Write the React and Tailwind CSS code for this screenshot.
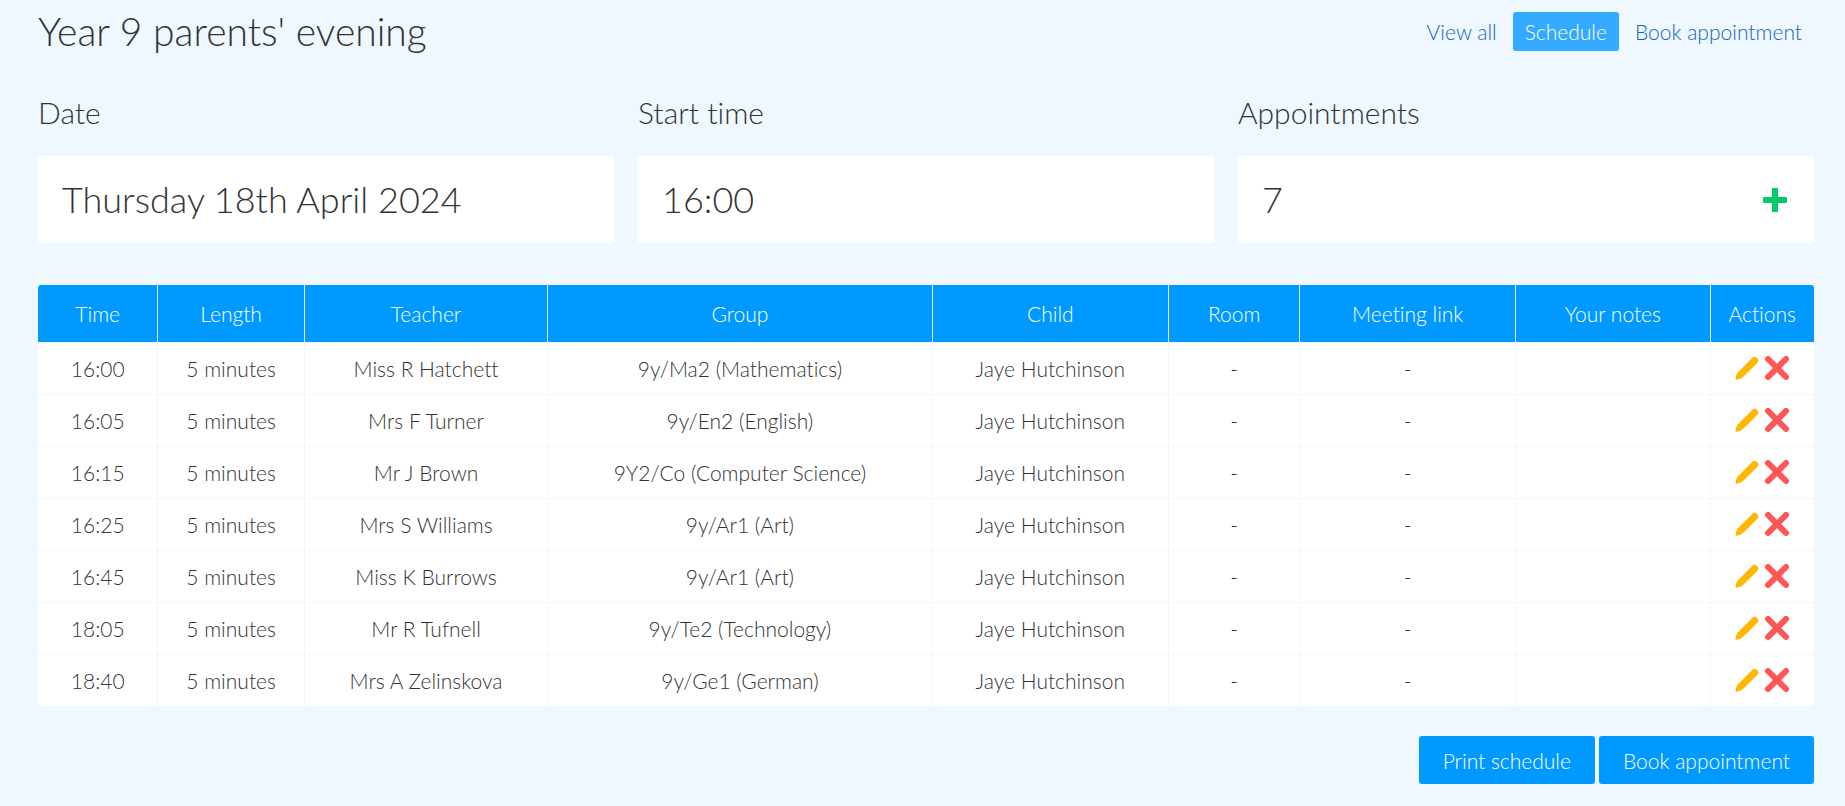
const columns = [
  { title: "Time", width: "w-[6.75%]" },
  { title: "Length", width: "w-[8.25%]" },
  { title: "Teacher", width: "w-[13.7%]" },
  { title: "Group", width: "w-[21.65%]" },
  { title: "Child", width: "w-[13.3%]" },
  { title: "Room", width: "w-[7.4%]" },
  { title: "Meeting link", width: "w-[12.15%]" },
  { title: "Your notes", width: "w-[10.95%]" },
  { title: "Actions", width: "w-[5.85%]" },
];

const rows = [
  ["16:00", "Miss R Hatchett", "9y/Ma2 (Mathematics)"],
  ["16:05", "Mrs F Turner", "9y/En2 (English)"],
  ["16:15", "Mr J Brown", "9Y2/Co (Computer Science)"],
  ["16:25", "Mrs S Williams", "9y/Ar1 (Art)"],
  ["16:45", "Miss K Burrows", "9y/Ar1 (Art)"],
  ["18:05", "Mr R Tufnell", "9y/Te2 (Technology)"],
  ["18:40", "Mrs A Zelinskova", "9y/Ge1 (German)"],
];

function PlusIcon() {
  return (
    <svg viewBox="0 0 24 24" className="size-6 fill-[#00cc66]" aria-hidden="true">
      <rect x="9" y="0" width="6" height="24" rx="1" />
      <rect x="0" y="9" width="24" height="6" rx="1" />
    </svg>
  );
}

function PencilIcon() {
  return (
    <svg viewBox="0 0 24 24" className="size-6 fill-[#ffb800]" aria-hidden="true">
      <path d="M17.2 2a3.5 3.5 0 0 1 5 5L8 21.1Q6.4 22.8 1.6 23.7Q0.4 23.8 0.5 22.8Q1.1 18.2 2.7 16.4Z" />
    </svg>
  );
}

function CrossIcon() {
  return (
    <svg viewBox="0 0 24 24" className="size-6" fill="none" stroke="#ff5555" strokeWidth="6" strokeLinecap="round" aria-hidden="true">
      <path d="M3 3L21 21M21 3L3 21" />
    </svg>
  );
}

function Panel({ label, children }) {
  return (
    <section className="flex-1">
      <h2 className="text-[30px] leading-9 font-light">{label}</h2>
      <div className="mt-[26px] flex items-center justify-between rounded-[3px] bg-white py-5 pl-6 pr-[27px] text-4xl leading-[47px]">
        {children}
      </div>
    </section>
  );
}

export default function App() {
  return (
    <div className="min-h-screen bg-[#eff7ff] pl-[38px] pr-[31px] pt-3 pb-[22px] font-['Lato',sans-serif] text-[21px] leading-[27px] font-light text-[#333] [font-variant-ligatures:none]">
      <header className="flex items-start justify-between">
        <h1 className="text-[39px] leading-[38px] font-light">Year 9 parents' evening</h1>
        <nav className="flex gap-1 text-[#1166bb]">
          <a href="#all" className="px-3 py-[6px]">View all</a>
          <a href="#schedule" aria-current="page" className="rounded-[3px] bg-[#33aaff] px-3 py-[6px] text-white">Schedule</a>
          <a href="#book" className="px-3 py-[6px]">Book appointment</a>
        </nav>
      </header>

      <div className="mt-[43px] flex gap-6">
        <Panel label="Date">Thursday 18th April 2024</Panel>
        <Panel label="Start time">16:00</Panel>
        <Panel label="Appointments">
          7
          <button type="button" aria-label="Add appointment"><PlusIcon /></button>
        </Panel>
      </div>

      <div className="mt-[42px] overflow-hidden rounded-[3px] bg-white">
        <table className="w-full table-fixed border-collapse text-center">
          <thead>
            <tr className="h-[57px] bg-[#0099ff] text-white">
              {columns.map((c) => (
                <th key={c.title} scope="col" className={`${c.width} border-r border-b border-[#eff7ff] font-light last:border-r-0`}>
                  {c.title}
                </th>
              ))}
            </tr>
          </thead>
          <tbody>
            {rows.map(([time, teacher, group]) => (
              <tr key={time} className="h-[52px] [&>td]:border-r [&>td]:border-b [&>td]:border-[#eff7ff] [&>td:last-child]:border-r-0 last:[&>td]:border-b-0">
                <td>{time}</td>
                <td>5 minutes</td>
                <td>{teacher}</td>
                <td>{group}</td>
                <td>Jaye Hutchinson</td>
                <td>-</td>
                <td>-</td>
                <td></td>
                <td>
                  <div className="flex justify-center gap-[6px]">
                    <button type="button" aria-label="Edit"><PencilIcon /></button>
                    <button type="button" aria-label="Remove"><CrossIcon /></button>
                  </div>
                </td>
              </tr>
            ))}
          </tbody>
        </table>
      </div>

      <footer className="mt-[30px] flex justify-end gap-1 text-white">
        <button type="button" className="h-12 rounded-[3px] bg-[#0099ff] px-6">Print schedule</button>
        <button type="button" className="h-12 rounded-[3px] bg-[#0099ff] px-6">Book appointment</button>
      </footer>
    </div>
  );
}
